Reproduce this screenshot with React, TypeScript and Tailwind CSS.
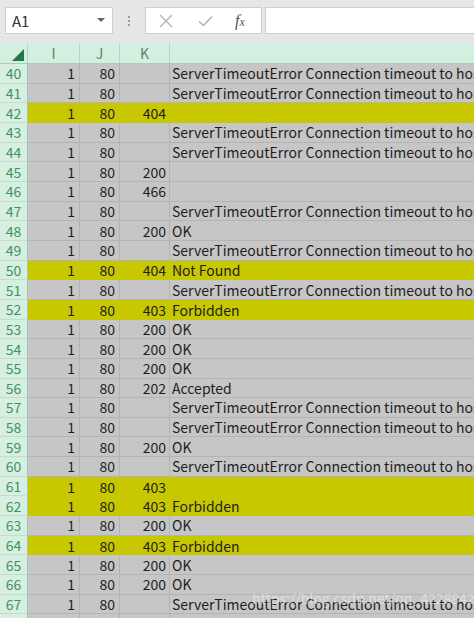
const STE = 'ServerTimeoutError Connection timeout to host'

type Row = { n: number; k?: string; l?: string; hl?: boolean }

const rows: Row[] = [
  { n: 40, l: STE },
  { n: 41, l: STE },
  { n: 42, k: '404', hl: true },
  { n: 43, l: STE },
  { n: 44, l: STE },
  { n: 45, k: '200' },
  { n: 46, k: '466' },
  { n: 47, l: STE },
  { n: 48, k: '200', l: 'OK' },
  { n: 49, l: STE },
  { n: 50, k: '404', l: 'Not Found', hl: true },
  { n: 51, l: STE },
  { n: 52, k: '403', l: 'Forbidden', hl: true },
  { n: 53, k: '200', l: 'OK' },
  { n: 54, k: '200', l: 'OK' },
  { n: 55, k: '200', l: 'OK' },
  { n: 56, k: '202', l: 'Accepted' },
  { n: 57, l: STE },
  { n: 58, l: STE },
  { n: 59, k: '200', l: 'OK' },
  { n: 60, l: STE },
  { n: 61, k: '403', hl: true },
  { n: 62, k: '403', l: 'Forbidden', hl: true },
  { n: 63, k: '200', l: 'OK' },
  { n: 64, k: '403', l: 'Forbidden', hl: true },
  { n: 65, k: '200', l: 'OK' },
  { n: 66, k: '200', l: 'OK' },
  { n: 67, l: STE },
]

function SheetRow({ r }: { r?: Row }) {
  const cell = r?.hl ? 'border-r border-transparent' : 'border-r border-[#b4b4b4]'
  return (
    <div className={`flex h-[19.67px] shrink-0 ${r?.hl ? 'bg-[#c8c800]' : 'bg-[#c6c6c6]'}`}>
      <div className="w-[28px] shrink-0 bg-[#d6efe0] border-r border-[#9fc9ae] border-b border-b-[#c3dccb] flex items-center justify-center text-[#43935f]">
        {r?.n ?? 68}
      </div>
      <div className={`flex flex-1 ${r?.hl ? '' : 'border-b border-[#b4b4b4]'}`}>
        <div className={`w-[52px] shrink-0 flex items-center justify-end pr-[4px] ${cell}`}>{r ? '1' : ''}</div>
        <div className={`w-[40px] shrink-0 flex items-center justify-end pr-[4px] ${cell}`}>{r ? '80' : ''}</div>
        <div className={`w-[50px] shrink-0 flex items-center justify-end pr-[3px] ${cell}`}>{r?.k}</div>
        <div className="flex-1 flex items-center pl-[2px] whitespace-nowrap overflow-hidden">{r?.l}</div>
      </div>
    </div>
  )
}

export default function App() {
  return (
    <div
      className="w-[474px] h-[618px] overflow-hidden bg-[#c6c6c6] text-[#1e1e1e] text-[14px] leading-none flex flex-col"
      style={{ fontFamily: '"Noto Sans CJK SC", "Noto Sans", sans-serif' }}
    >
      {/* toolbar */}
      <div className="h-[43px] shrink-0 bg-[#e6e6e6] flex items-start pt-[7px] pl-[5px]">
        <div className="w-[108px] h-[27px] bg-white border border-[#cfcfcf] flex items-center justify-between pl-[6px] pr-[7px] text-[#333]">
          <span className="text-[15px]">A1</span>
          <svg width="8" height="5" viewBox="0 0 8 5"><path d="M0 0h8L4 4z" fill="#666" /></svg>
        </div>
        <div className="w-[32px] h-[27px] flex flex-col items-center justify-center gap-[2px]">
          <span className="w-[2px] h-[2px] bg-[#9a9a9a]" />
          <span className="w-[2px] h-[2px] bg-[#9a9a9a]" />
          <span className="w-[2px] h-[2px] bg-[#9a9a9a]" />
        </div>
        <div className="w-[117px] h-[27px] bg-white border border-[#cfcfcf] flex items-center">
          <svg className="ml-[13px]" width="14" height="14" viewBox="0 0 14 14">
            <path d="M1 1l12 12M13 1L1 13" stroke="#b3b3b3" strokeWidth="1.4" />
          </svg>
          <svg className="ml-[25px]" width="15" height="12" viewBox="0 0 15 12">
            <path d="M1 6.5l4.5 4L14 1.5" stroke="#b3b3b3" strokeWidth="1.6" fill="none" />
          </svg>
          <span
            className="ml-[22px] text-[16px] italic text-[#555]"
            style={{ fontFamily: '"Liberation Serif", serif' }}
          >
            f<span className="text-[12px]">x</span>
          </span>
        </div>
        <div className="ml-[3px] flex-1 h-[27px] bg-white border border-[#cfcfcf] border-r-0" />
      </div>

      {/* column header */}
      <div className="h-[21px] shrink-0 flex bg-[#d3efdf] border-b border-[#a9cfb6] text-[#4f8a65]">
        <div className="w-[28px] shrink-0 border-r border-[#b5d6c1] flex items-end justify-end pr-[3px] pb-[2px]">
          <svg width="12" height="12" viewBox="0 0 12 12"><path d="M12 0V12H0z" fill="#1f7a45" /></svg>
        </div>
        <div className="w-[52px] shrink-0 border-r border-[#b5d6c1] flex items-center justify-center">I</div>
        <div className="w-[40px] shrink-0 border-r border-[#b5d6c1] flex items-center justify-center">J</div>
        <div className="w-[50px] shrink-0 border-r border-[#b5d6c1] flex items-center justify-center">K</div>
        <div className="flex-1" />
      </div>

      {/* rows */}
      <div className="relative flex flex-col">
        {rows.map((r) => (
          <SheetRow key={r.n} r={r} />
        ))}
        <SheetRow />
        <span className="absolute left-[252px] top-[527px] text-[14px] text-white/45 whitespace-nowrap">
          https://blog.csdn.net/qq_42288429
        </span>
      </div>
    </div>
  )
}
